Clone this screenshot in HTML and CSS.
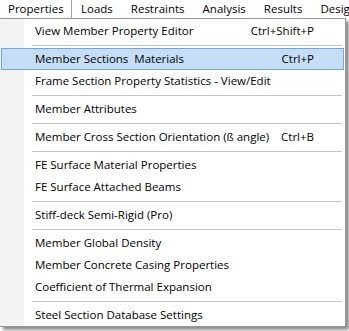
FILE: index.html
```html
<!DOCTYPE html>
<html>
<head>
<meta charset="utf-8">
<link rel="stylesheet" href="styles.css">
</head>
<body>
<div class="menubar">
  <div class="top active">Properties</div>
  <div class="top">Loads</div>
  <div class="top">Restraints</div>
  <div class="top">Analysis</div>
  <div class="top">Results</div>
  <div class="top">Design</div>
</div>
<div class="menu">
  <div class="item"><span>View Member Property Editor</span><span class="key">Ctrl+Shift+P</span></div>
  <div class="sep"></div>
  <div class="item hl"><span>Member Sections &nbsp;Materials</span><span class="key">Ctrl+P</span></div>
  <div class="item"><span>Frame Section Property Statistics - View/Edit</span></div>
  <div class="sep"></div>
  <div class="item"><span>Member Attributes</span></div>
  <div class="sep"></div>
  <div class="item"><span>Member Cross Section Orientation (ß angle)</span><span class="key">Ctrl+B</span></div>
  <div class="sep"></div>
  <div class="item"><span>FE Surface Material Properties</span></div>
  <div class="item"><span>FE Surface Attached Beams</span></div>
  <div class="sep"></div>
  <div class="item"><span>Stiff-deck Semi-Rigid (Pro)</span></div>
  <div class="sep"></div>
  <div class="item"><span>Member Global Density</span></div>
  <div class="item"><span>Member Concrete Casing Properties</span></div>
  <div class="item"><span>Coefficient of Thermal Expansion</span></div>
  <div class="sep"></div>
  <div class="item"><span>Steel Section Database Settings</span></div>
</div>
</body>
</html>
```

FILE: styles.css
```css
html, body {
  margin: 0;
  padding: 0;
  background: #ffffff;
  width: 349px;
  height: 331px;
  overflow: hidden;
}
body {
  font-family: "Open Sans", "Noto Sans", sans-serif;
  font-size: 11.5px;
  color: #000;
}
.menubar {
  display: flex;
  height: 18px;
  background: #ffffff;
  white-space: nowrap;
}
.top {
  line-height: 17px;
  padding: 0 9px;
  height: 18px;
  box-sizing: border-box;
}
.top.active {
  width: 72px;
  padding-left: 8px;
  border-right: 1px solid #a0a0a0;
}
.menu {
  width: 346px;
  box-sizing: border-box;
  border: 1px solid #979797;
  border-left: none;
  padding: 1px 1px 0 0;
  background: linear-gradient(to right, #f3f3f3 0, #f3f3f3 24px, #ffffff 24px);
  box-shadow: 3px 3px 3px rgba(0, 0, 0, 0.45);
}
.item {
  display: flex;
  justify-content: space-between;
  height: 22px;
  line-height: 22px;
  padding: 0 30px 0 35px;
  box-sizing: border-box;
  white-space: nowrap;
}
.item.hl {
  margin-left: 1px;
  padding-left: 33px;
  padding-right: 29px;
  background: #c5def5;
  border: 1px solid #6fa6de;
  line-height: 20px;
}
.sep {
  height: 6px;
  margin-left: 32px;
  margin-right: 2px;
  background: linear-gradient(#ffffff 0, #ffffff 3px, #c4c4c4 3px, #c4c4c4 4px, #ffffff 4px);
}
```
